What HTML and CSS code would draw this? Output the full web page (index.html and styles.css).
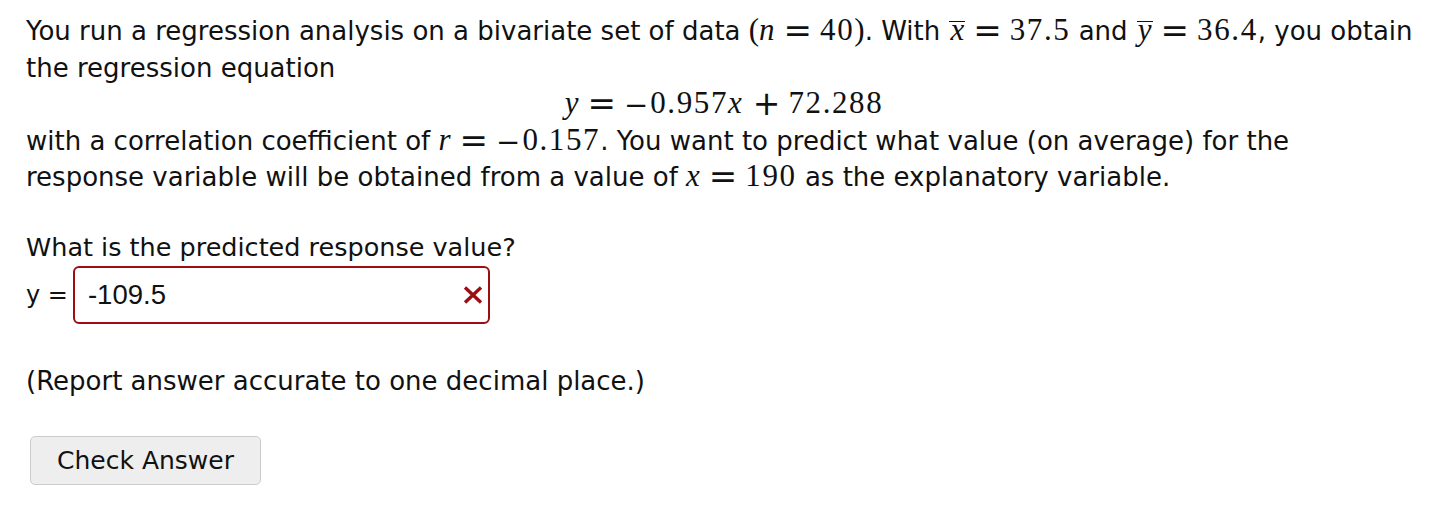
FILE: index.html
```html
<!DOCTYPE html>
<html>
<head>
<meta charset="utf-8">
<link rel="stylesheet" href="styles.css">
</head>
<body>
<div class="question">
  <p class="para">You run a regression analysis on a bivariate set of data <span class="m">(<i>n</i><span class="rel">=</span><span class="num">40</span>)</span>. With <span class="m"><i class="bar">x</i><span class="rel">=</span><span class="num">37.5</span></span> and <span class="m"><i class="bar">y</i><span class="rel">=</span><span class="num">36.4</span></span>, you obtain<br>the regression equation</p>
  <div class="display"><span class="m"><i>y</i><span class="rel">=</span><span class="neg">−</span><span class="num">0.957</span><i>x</i><span class="bin">+</span><span class="num">72.288</span></span></div>
  <p class="para">with a correlation coefficient of <span class="m"><i>r</i><span class="rel">=</span><span class="neg">−</span><span class="num">0.157</span></span>. You want to predict what value (on average) for the<br>response variable will be obtained from a value of <span class="m"><i>x</i><span class="rel">=</span><span class="num">190</span></span> as the explanatory variable.</p>

  <p class="prompt">What is the predicted response value?</p>
  <div class="answer-row">
    <span class="ylabel">y =</span>
    <div class="answer-box">
      <span class="answer-value">-109.5</span>
      <svg class="wrong" width="20" height="18" viewBox="0 0 20 18"><path d="M2 1.5 L18 16.5 M18 1.5 L2 16.5" stroke="#9b0f14" stroke-width="3.4" fill="none"/></svg>
    </div>
  </div>

  <p class="note">(Report answer accurate to one decimal place.)</p>

  <button class="check">Check Answer</button>
</div>
</body>
</html>
```

FILE: styles.css
```css
html, body {
  margin: 0;
  padding: 0;
  background: #ffffff;
}
body {
  font-family: "DejaVu Sans", Verdana, sans-serif;
  color: #111111;
}
.question {
  width: 1396px;
  padding: 13px 0 0 26px;
}
.para {
  margin: 0;
  font-size: 26px;
  line-height: 36.5px;
  white-space: nowrap;
}
.m {
  font-family: "Liberation Serif", "Times New Roman", serif;
  font-size: 31px;
  line-height: 0;
}
.m i {
  font-style: italic;
  padding-right: 1px;
}
.num {
  letter-spacing: 1.6px;
}
.rel, .bin, .neg {
  font-family: "DejaVu Sans", sans-serif;
  vertical-align: -2px;
}
.rel {
  font-size: 34px;
  margin: 0 8px;
}
.bin {
  font-size: 33px;
  margin: 0 8px 0 10px;
}
.neg {
  font-size: 29px;
  margin-right: 2px;
}
.bar {
  position: relative;
  padding: 0 2px;
}
.bar::before {
  content: "";
  position: absolute;
  left: 1px;
  right: 0;
  top: 9px;
  border-top: 1.5px solid #111;
}
.display {
  text-align: center;
  font-size: 26px;
  line-height: 36.5px;
}
.prompt {
  margin: 33.5px 0 0;
  font-size: 25.5px;
  line-height: 36.5px;
}
.answer-row {
  display: flex;
  align-items: center;
  gap: 5px;
}
.ylabel {
  font-size: 24px;
}
.answer-box {
  width: 417px;
  height: 58px;
  box-sizing: border-box;
  border: 2px solid #9b0f14;
  border-radius: 6px;
  display: flex;
  align-items: center;
  justify-content: space-between;
  padding: 0 5px 0 13px;
}
.answer-value {
  font-family: "Liberation Sans", Arial, sans-serif;
  font-size: 27.5px;
  color: #111;
}
.note {
  margin: 39px 0 0;
  font-size: 26px;
  line-height: 36.5px;
}
.check {
  display: block;
  margin: 36.5px 0 0 4px;
  width: 231px;
  height: 49px;
  font-family: "DejaVu Sans", Verdana, sans-serif;
  font-size: 25px;
  color: #111;
  background: #eeeeee;
  border: 1.5px solid #cccccc;
  border-radius: 5px;
}
```
